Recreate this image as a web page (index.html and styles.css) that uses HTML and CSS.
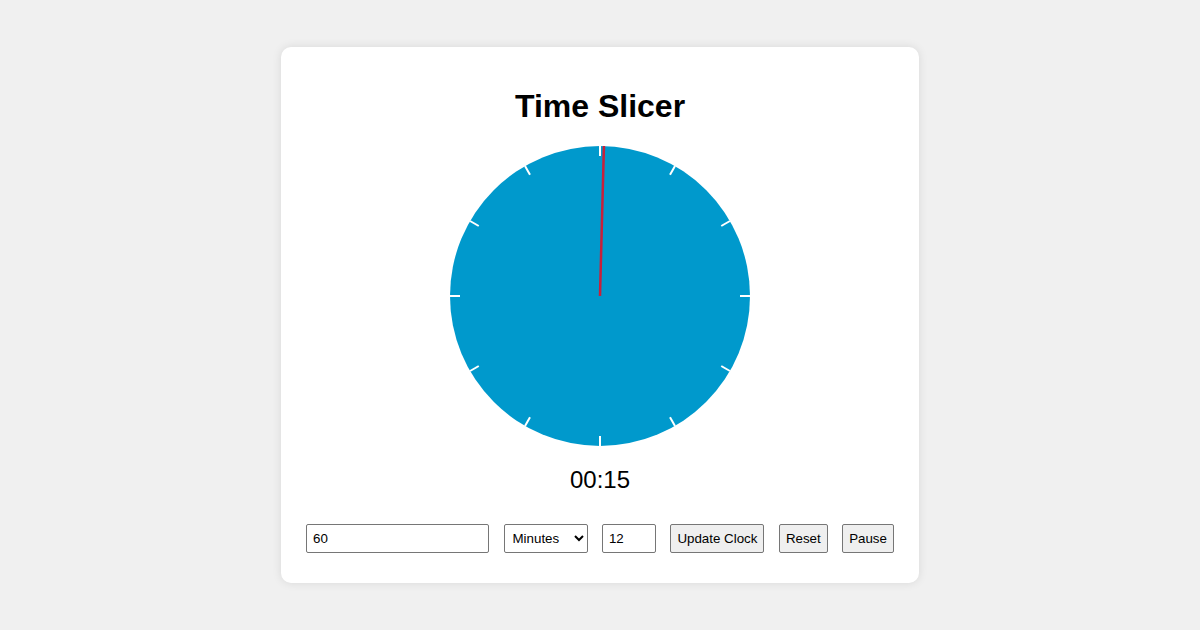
FILE: index.html
```html
<!DOCTYPE html>
<html lang="en">
<head>
    <meta charset="UTF-8">
    <meta name="viewport" content="width=device-width, initial-scale=1.0">
    <title>Time Slicer</title>
    <link rel="stylesheet" href="styles.css">
</head>
<body>
    <div class="container">
        <h1 class="title">Time Slicer</h1>
        <svg class="clock" width="300" height="300" viewBox="0 0 300 300">
            <circle cx="150" cy="150" r="150" fill="#0099cc"/>
            <g stroke="#ffffff" stroke-width="2">
                <line x1="150" y1="0" x2="150" y2="10"/>
                <line x1="150" y1="0" x2="150" y2="10" transform="rotate(30 150 150)"/>
                <line x1="150" y1="0" x2="150" y2="10" transform="rotate(60 150 150)"/>
                <line x1="150" y1="0" x2="150" y2="10" transform="rotate(90 150 150)"/>
                <line x1="150" y1="0" x2="150" y2="10" transform="rotate(120 150 150)"/>
                <line x1="150" y1="0" x2="150" y2="10" transform="rotate(150 150 150)"/>
                <line x1="150" y1="0" x2="150" y2="10" transform="rotate(180 150 150)"/>
                <line x1="150" y1="0" x2="150" y2="10" transform="rotate(210 150 150)"/>
                <line x1="150" y1="0" x2="150" y2="10" transform="rotate(240 150 150)"/>
                <line x1="150" y1="0" x2="150" y2="10" transform="rotate(270 150 150)"/>
                <line x1="150" y1="0" x2="150" y2="10" transform="rotate(300 150 150)"/>
                <line x1="150" y1="0" x2="150" y2="10" transform="rotate(330 150 150)"/>
            </g>
            <!-- hand: 15s of a 60 minute slice -->
            <line x1="150" y1="150" x2="150" y2="0" stroke="#c8203a" stroke-width="2.5" transform="rotate(1.5 150 150)"/>
        </svg>
        <div class="time" id="time">00:15</div>
        <div class="controls">
            <input class="input duration" type="text" id="duration" value="60">
            <select class="dropdown" id="unit">
                <option value="minutes">Minutes</option>
                <option value="seconds">Seconds</option>
                <option value="hours">Hours</option>
            </select>
            <input class="input slices" type="number" id="slices" value="12">
            <button>Update Clock</button>
            <button>Reset</button>
            <button>Pause</button>
        </div>
    </div>
</body>
</html>
```

FILE: styles.css
```css
body {
    font-family: "Liberation Sans", Arial, sans-serif;
    margin: 0;
    padding: 0;
    background-color: #f0f0f0;
    color: #000000;
    display: flex;
    justify-content: center;
    align-items: center;
    min-height: 100vh;
}
.container {
    background-color: #ffffff;
    padding: 20px 20px 30px;
    border-radius: 10px;
    box-shadow: 0 0 10px rgba(0, 0, 0, 0.1);
    display: flex;
    flex-direction: column;
    align-items: center;
}
.title {
    font-size: 32px;
    font-weight: bold;
    margin: 21px 0 21px;
}
.clock {
    display: block;
}
.time {
    font-size: 24px;
    margin: 20px 0 30px;
}
.controls {
    font-size: 16px;
    line-height: 29px;
    white-space: nowrap;
}
.input, .dropdown, button {
    box-sizing: border-box;
    height: 29px;
    font-family: "Liberation Sans", Arial, sans-serif;
    font-size: 13.33px;
    border: 1px solid #767676;
    border-radius: 2px;
    color: #000000;
    margin: 0 5px;
    vertical-align: top;
}
.input {
    padding: 5px 6px;
    background-color: #ffffff;
}
.duration {
    width: 183px;
}
.slices {
    width: 54px;
}
.dropdown {
    width: 84px;
    padding: 0 2px 0 4px;
    background-color: #ffffff;
}
button {
    padding: 0 6px;
    background-color: #efefef;
    cursor: pointer;
}
button:hover {
    background-color: #e5e5e5;
}
```
